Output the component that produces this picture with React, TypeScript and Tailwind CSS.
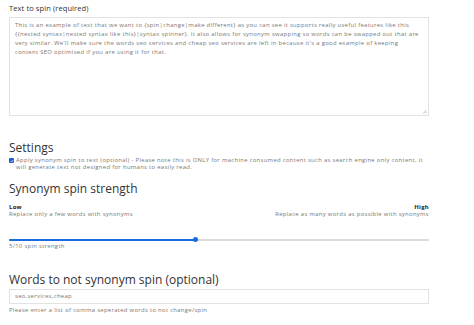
import React from 'react';

const sample =
  "This is an example of text that we want to {spin|change|make different} as you can see it supports really useful features like this {{nested syntax|nested syntax like this}|syntax spinner}. It also allows for synonym swapping so words can be swapped out that are very similar. We'll make sure the words seo services and cheap seo services are left in because it's a good example of keeping content SEO optimised if you are using it for that.";

const small = 'text-[5.9px] tracking-[0.32px]';

export default function App() {
  return (
    <div
      className="w-[474px] h-[325px] bg-white overflow-hidden text-[#333]"
      style={{ fontFamily: '"Open Sans", "Liberation Sans", sans-serif' }}
    >
      <div className="w-[420px] ml-[9px] pt-[3px]">
        {/* text to spin */}
        <label className="block text-[7.5px] font-medium leading-[11px] mb-[3px] tracking-[0.1px]">Text to spin (required)</label>
        <div className="relative h-[99px] border border-[#e2e2e2] px-[5px] py-[3px]">
          <p className={`${small} leading-[9px] text-[#777]`}>{sample}</p>
          <svg className="absolute right-[1px] bottom-[1px]" width="5" height="5" viewBox="0 0 5 5">
            <path d="M4.5 1 L1 4.5 M4.5 3 L3 4.5" stroke="#999" strokeWidth="0.6" />
          </svg>
        </div>

        {/* settings */}
        <h2 className="mt-[24px] text-[12px] font-medium leading-[15px]">Settings</h2>
        <div className="mt-[2px] flex items-start gap-[2px]">
          <span className="mt-[1px] w-[5px] h-[5px] shrink-0 rounded-[1px] bg-[#1a5fd0] flex items-center justify-center">
            <svg width="4" height="4" viewBox="0 0 4 4">
              <path d="M0.7 2 L1.6 3 L3.3 1" stroke="white" strokeWidth="0.7" fill="none" />
            </svg>
          </span>
          <p className={`${small} leading-[6.5px] text-[#777]`}>
            Apply synonym spin to text (optional) - Please note this is ONLY for machine consumed content such as search engine only content, it will generate text not designed for humans to easily read.
          </p>
        </div>

        {/* strength */}
        <h2 className="mt-[11px] text-[12px] font-medium leading-[15px]">Synonym spin strength</h2>
        <div className="mt-[8px] flex justify-between items-end">
          <div>
            <div className={`${small} font-bold leading-[6.5px] text-[#222]`}>Low</div>
            <div className={`${small} leading-[6.5px] text-[#777]`}>Replace only a few words with synonyms</div>
          </div>
          <div className="text-right">
            <div className={`${small} font-bold leading-[6.5px] text-[#222]`}>High</div>
            <div className={`${small} leading-[6.5px] text-[#777]`}>Replace as many words as possible with synonyms</div>
          </div>
        </div>
        <div className="relative mt-[20px] h-[5px] flex items-center">
          <div className="w-full h-[2px] bg-[#dcdcdc] rounded-full" />
          <div className="absolute left-0 w-[186px] h-[2px] bg-[#1a6be0] rounded-full" />
          <div className="absolute left-[184px] w-[5px] h-[5px] rounded-full bg-[#1a6be0]" />
        </div>
        <div className={`mt-[1px] ${small} leading-[7px] text-[#777]`}>5/10 spin strength</div>

        {/* words */}
        <h2 className="mt-[22px] text-[12px] font-medium leading-[15px]">Words to not synonym spin (optional)</h2>
        <div className={`mt-[2px] h-[15px] border border-[#e2e2e2] px-[5px] flex items-center ${small} text-[#777]`}>
          seo,services,cheap
        </div>
        <div className={`mt-[3px] ${small} leading-[7px] text-[#777]`}>Please enter a list of comma seperated words to not change/spin</div>
      </div>
    </div>
  );
}
